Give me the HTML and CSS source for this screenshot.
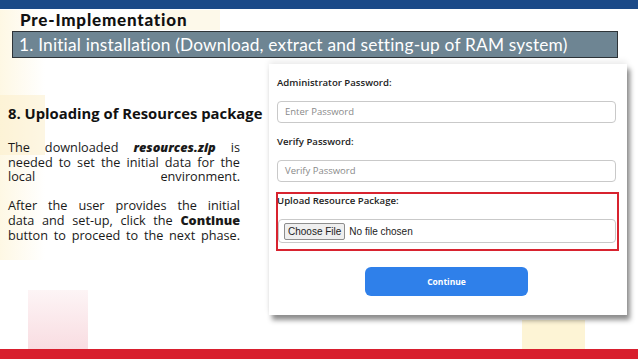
FILE: index.html
```html
<!DOCTYPE html>
<html>
<head>
<meta charset="utf-8">
<link rel="stylesheet" href="styles.css">
</head>
<body>
<div class="deco deco-y1"></div>
<div class="deco deco-y2"></div>
<div class="deco deco-p1"></div>
<div class="deco deco-p2"></div>
<div class="deco deco-y3"></div>
<div class="deco deco-y4"></div>
<div class="deco deco-g1"></div>
<div class="topbar"></div>
<header class="header">
  <h1 class="title">Pre-Implementation</h1>
  <div class="subtitle">1. Initial installation (Download, extract and setting-up of RAM system)</div>
</header>
<main class="main">
  <section class="left">
    <h2 class="step">8. Uploading of Resources package</h2>
    <p class="para">The downloaded <b><i>resources.zip</i></b> is<br>needed to set the initial data for the<br>local environment.</p>
    <p class="para">After the user provides the initial<br>data and set-up, click the <b>Continue</b><br>button to proceed to the next phase.</p>
  </section>
  <section class="card">
    <label class="lbl">Administrator Password:</label>
    <div class="input">Enter Password</div>
    <label class="lbl">Verify Password:</label>
    <div class="input">Verify Password</div>
    <div class="highlight">
      <label class="lbl">Upload Resource Package:</label>
      <div class="file">
        <span class="choose">Choose File</span>
        <span class="nofile">No file chosen</span>
      </div>
    </div>
    <div class="btnrow"><span class="btn">Continue</span></div>
  </section>
</main>
<div class="bottombar"></div>
</body>
</html>
```
FILE: styles.css
```css
html, body { margin: 0; padding: 0; }
body {
  width: 638px;
  height: 359px;
  overflow: hidden;
  position: relative;
  background: #fff;
  display: flex;
  flex-direction: column;
  font-family: "Open Sans", "Noto Sans", sans-serif;
  color: #111;
}
.deco { position: absolute; z-index: 0; }
.deco-y1 { left: 0; top: 10px; width: 45px; height: 250px; background: linear-gradient(90deg, rgba(253,243,210,0.6), rgba(255,255,255,0)); }
.deco-y2 { left: 0; top: 95px; width: 45px; height: 60px; background: rgba(252,238,200,0.5); }
.deco-p1 { left: 28px; top: 290px; width: 60px; height: 62px; background: linear-gradient(180deg, rgba(248,220,224,0.3), rgba(244,196,204,0.6)); }
.deco-p2 { left: 99px; top: 352px; width: 55px; height: 8px; background: rgba(248,210,216,0.6); }
.deco-y3 { left: 522px; top: 320px; width: 63px; height: 34px; background: rgba(252,240,195,0.7); }
.deco-y4 { left: 459px; top: 352px; width: 55px; height: 8px; background: rgba(252,240,195,0.7); }
.deco-g1 { left: 150px; top: 10px; width: 70px; height: 20px; background: rgba(252,245,220,0.6); }
.topbar { height: 9px; background: #1b4a88; flex: none; position: relative; z-index: 1; }
.header { position: relative; z-index: 1; padding: 1px 20px 0 12px; flex: none; }
.title {
  margin: 0 0 0 8px;
  font-family: "Lato", sans-serif;
  font-weight: 900;
  font-size: 17px;
  line-height: 20px;
  letter-spacing: 0.8px;
  color: #111;
}
.subtitle {
  margin-top: 1px;
  height: 25px;
  background: #6e8593;
  border: 1px solid #2e3438;
  color: #fff;
  font-family: "Lato", sans-serif;
  font-size: 17.3px;
  line-height: 26px;
  padding-left: 6px;
  letter-spacing: 0.2px;
  white-space: nowrap;
}
.main { flex: 1; display: flex; position: relative; z-index: 1; padding-top: 6px; }
.left { width: 261px; padding-left: 8px; padding-top: 40px; flex: none; }
.step {
  margin: 0 0 17px;
  font-family: "Open Sans", sans-serif;
  font-weight: 700;
  font-size: 14.8px;
  line-height: 19px;
  white-space: nowrap;
}
.para {
  margin: 0 0 14.6px;
  width: 232px;
  font-family: "Open Sans", sans-serif;
  font-size: 12.7px;
  line-height: 14.6px;
  text-align: justify;
  text-align-last: justify;
  color: #1a1a1a;
  white-space: nowrap;
}
.para b { font-weight: 800; }
.card {
  width: 358px;
  height: 251px;
  background: #fff;
  box-shadow: 3px 5px 5px rgba(0,0,0,0.45), 0 -3px 6px rgba(0,0,0,0.08);
  box-sizing: border-box;
  padding: 12px 11px 0 8px;
  font-family: "Open Sans", sans-serif;
  flex: none;
}
.lbl {
  display: block;
  font-size: 9.6px;
  font-weight: 600;
  color: #222;
  line-height: 14px;
  height: 14px;
}
.input {
  margin: 11px 0 12px;
  height: 20px;
  border: 1px solid #c9c9c9;
  border-radius: 4px;
  font-size: 9.5px;
  color: #8a8a8a;
  line-height: 20px;
  padding-left: 7px;
}
.highlight {
  margin: -2px -3px 0 -1px;
  border: 2px solid #d8232f;
  height: 55px;
  padding: 0 1px 0 0;
}
.highlight .lbl { margin-left: -1px; }
.file {
  margin-top: 11px;
  height: 22px;
  border: 1px solid #c9c9c9;
  border-radius: 4px;
  display: flex;
  align-items: center;
  padding-left: 5px;
  font-family: "Liberation Sans", Arial, sans-serif;
  font-size: 10px;
  color: #222;
}
.choose {
  border: 1px solid #8d8d8d;
  background: #efefef;
  border-radius: 2px;
  padding: 1px 3px;
  line-height: 13px;
  margin-right: 4px;
}
.btnrow { display: flex; justify-content: center; margin-top: 16px; }
.btn {
  width: 163px;
  height: 29px;
  background: #2f80ea;
  border-radius: 6px;
  color: #fff;
  font-size: 8.5px;
  font-weight: 700;
  display: flex;
  align-items: center;
  justify-content: center;
}
.bottombar { height: 10px; background: #d81f2e; flex: none; position: relative; z-index: 1; }
```
